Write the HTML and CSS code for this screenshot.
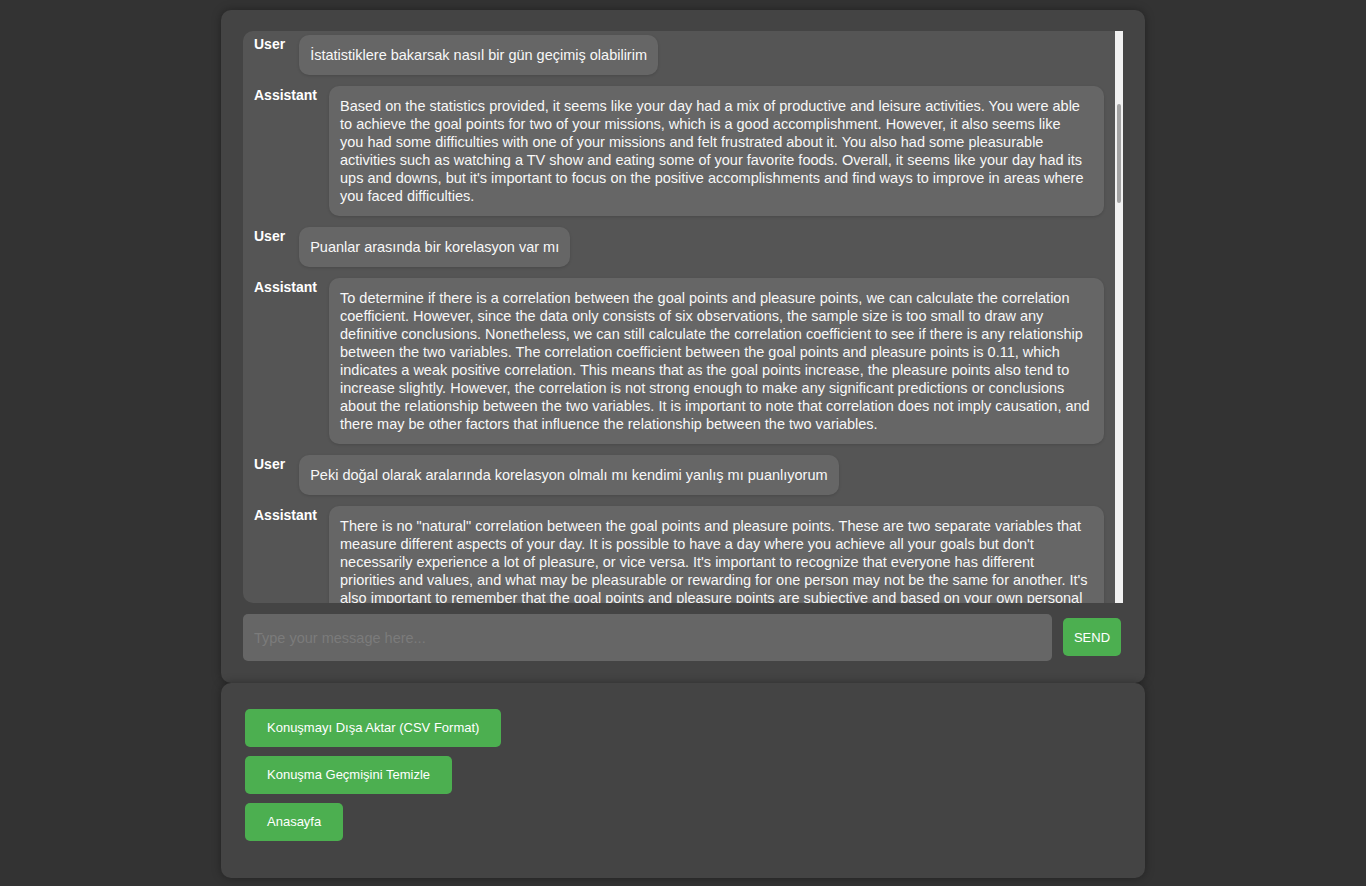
FILE: index.html
```html
<!DOCTYPE html>
<html lang="tr">
<head>
<meta charset="utf-8">
<title>Chat</title>
<link rel="stylesheet" href="styles.css">
</head>
<body>
<div class="wrap">
  <div class="panel chat-panel">
    <div class="chat-box">
      <div class="messages">
        <div class="msg">
          <div class="label label-user">User</div>
          <div class="bubble">İstatistiklere bakarsak nasıl bir gün geçimiş olabilirim</div>
        </div>
        <div class="msg">
          <div class="label">Assistant</div>
          <div class="bubble">Based on the statistics provided, it seems like your day had a mix of productive and leisure activities. You were able to achieve the goal points for two of your missions, which is a good accomplishment. However, it also seems like you&nbsp;had some difficulties with one of your missions and felt frustrated about it. You also had some pleasurable activities such as watching a TV show and eating some of your favorite foods. Overall, it seems like your day had its ups and downs, but it's important to focus on the positive accomplishments and find ways to improve in areas where you faced difficulties.</div>
        </div>
        <div class="msg">
          <div class="label label-user">User</div>
          <div class="bubble">Puanlar arasında bir korelasyon var mı</div>
        </div>
        <div class="msg">
          <div class="label">Assistant</div>
          <div class="bubble">To determine if there is a correlation between the goal points and pleasure points, we can calculate the correlation coefficient. However, since the data only consists of six observations, the sample size is too small to draw any definitive conclusions. Nonetheless, we can still calculate the correlation coefficient to see if there is any relationship between the two variables. The correlation coefficient between the goal points and pleasure points is 0.11, which indicates a weak positive correlation. This means that as the goal points increase, the pleasure points also tend to increase slightly. However, the correlation is not strong enough to make any significant predictions or conclusions about the relationship between the two variables. It is important to note that correlation does not imply causation, and there may be other factors that influence the relationship between the two variables.</div>
        </div>
        <div class="msg">
          <div class="label label-user">User</div>
          <div class="bubble">Peki doğal olarak aralarında korelasyon olmalı mı kendimi yanlış mı puanlıyorum</div>
        </div>
        <div class="msg">
          <div class="label">Assistant</div>
          <div class="bubble">There is no "natural" correlation between the goal points and pleasure points. These are two separate variables that measure different aspects of your day. It is possible to have a day where you achieve all your goals but don't necessarily experience a lot of pleasure, or vice versa. It's important to recognize that everyone has different priorities&nbsp;and values, and what may be pleasurable or rewarding for one person may not be the same for another. It's also important to remember that the goal points and pleasure points are subjective and based on your own personal experiences and perceptions, so there is no right or wrong way to rate them.</div>
        </div>
      </div>
      <div class="scrollbar"><div class="thumb"></div></div>
    </div>
    <div class="input-row">
      <input class="msg-input" type="text" placeholder="Type your message here...">
      <button class="send-btn">SEND</button>
    </div>
  </div>
  <div class="panel actions-panel">
    <button class="action-btn">Konuşmayı Dışa Aktar (CSV Format)</button>
    <button class="action-btn">Konuşma Geçmişini Temizle</button>
    <button class="action-btn">Anasayfa</button>
  </div>
</div>
</body>
</html>
```

FILE: styles.css
```css
* { box-sizing: border-box; }

html, body {
  margin: 0;
  background: #333333;
}

body {
  padding-top: 10px;
  font-family: "Liberation Sans", Arial, sans-serif;
  color: #ffffff;
  height: 886px;
  overflow: hidden;
}

.wrap {
  width: 924px;
  margin: 0 auto;
}

.panel {
  background: #444444;
  border-radius: 10px;
  box-shadow: 0 0 10px rgba(0, 0, 0, 0.35);
}

.chat-panel {
  padding: 21px 22px 22px 22px;
}

.chat-box {
  display: flex;
  height: 572px;
}

.messages {
  flex: 1;
  background: #555555;
  border-radius: 10px 0 0 10px;
  overflow: hidden;
  padding: 4px 11px 0 11px;
}

.scrollbar {
  width: 8px;
  flex: none;
  background: #f1f1f1;
  padding-top: 73px;
}

.thumb {
  width: 4px;
  height: 99px;
  margin-left: 2px;
  background: #a3a3a3;
  border-radius: 2px;
}

.msg {
  display: flex;
  align-items: flex-start;
  gap: 12px;
  margin-bottom: 11px;
}

.label {
  flex: none;
  font-weight: bold;
  font-size: 14px;
  line-height: 18px;
  color: #ffffff;
}

.label-user {
  padding-right: 2px;
}

.bubble {
  background: #666666;
  color: #f8f8f8;
  padding: 11px;
  border-radius: 10px;
  font-size: 14.5px;
  line-height: 18px;
  box-shadow: 0 1px 3px rgba(0, 0, 0, 0.15);
}

.input-row {
  display: flex;
  align-items: center;
  gap: 11px;
  margin-top: 11px;
}

.msg-input {
  flex: 1;
  height: 47px;
  background: #666666;
  border: none;
  border-radius: 5px;
  padding: 0 11px;
  font-family: "Liberation Sans", Arial, sans-serif;
  font-size: 14.5px;
  color: #ffffff;
  outline: none;
}

.msg-input::placeholder {
  color: #7b7b7b;
}

.send-btn {
  width: 58px;
  height: 38px;
  margin-right: 2px;
  margin-bottom: 1px;
  background: #4caf50;
  color: #ffffff;
  border: none;
  border-radius: 5px;
  font-family: "Liberation Sans", Arial, sans-serif;
  font-size: 13px;
  padding: 0;
}

.actions-panel {
  display: flex;
  flex-direction: column;
  align-items: flex-start;
  gap: 9px;
  padding: 26px 24px 37px 24px;
}

.action-btn {
  background: #4caf50;
  color: #ffffff;
  border: none;
  border-radius: 5px;
  font-family: "Liberation Sans", Arial, sans-serif;
  font-size: 13px;
  line-height: 16px;
  padding: 11px 22px;
}
```
